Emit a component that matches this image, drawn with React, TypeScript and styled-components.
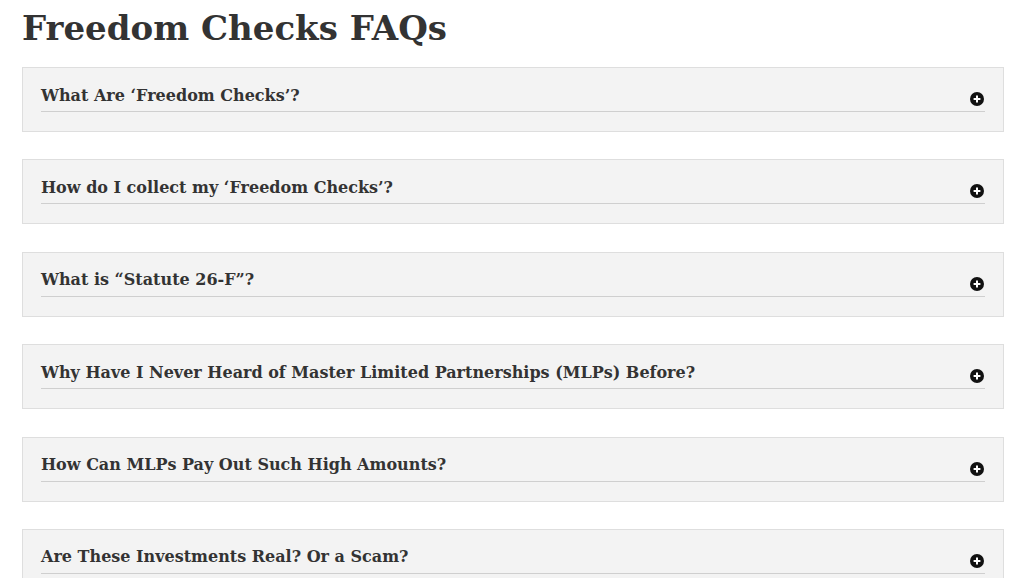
import styled, { createGlobalStyle } from "styled-components";

const GlobalStyle = createGlobalStyle`
  html, body {
    margin: 0;
    padding: 0;
    background: #ffffff;
  }
  body {
    font-family: "DejaVu Serif", "Liberation Serif", serif;
    color: #333333;
  }
`;

const Page = styled.main`
  padding: 0 20px 0 22px;
  width: 982px;
`;

const Title = styled.h1`
  margin: 0;
  padding-top: 6px;
  height: 61px;
  font-size: 34px;
  line-height: 44px;
  font-weight: 700;
  color: #333333;
`;

const List = styled.div`
  display: flex;
  flex-direction: column;
  gap: 27.4px;
`;

const Item = styled.section`
  background: #f3f3f3;
  border: 1px solid #dedede;
  padding: 0 18px 19px;
`;

const Header = styled.div`
  display: flex;
  align-items: center;
  justify-content: space-between;
  height: 43px;
  border-bottom: 1px solid #cfcfcf;
`;

const Question = styled.h3`
  margin: 0;
  padding-top: 11px;
  font-size: 16px;
  font-weight: 700;
  color: #333333;
`;

const Toggle = styled.span`
  display: flex;
  width: 14px;
  height: 14px;
  margin: 19px 1px 0 0;
`;

const PlusIcon = () => (
  <svg width="14" height="14" viewBox="0 0 14 14">
    <circle cx="7" cy="7" r="7" fill="#111111" />
    <path d="M7 3.6v6.8M3.6 7h6.8" stroke="#ffffff" strokeWidth="2" />
  </svg>
);

const faqs = [
  "What Are \u2018Freedom Checks\u2019?",
  "How do I collect my \u2018Freedom Checks\u2019?",
  "What is \u201CStatute 26-F\u201D?",
  "Why Have I Never Heard of Master Limited Partnerships (MLPs) Before?",
  "How Can MLPs Pay Out Such High Amounts?",
  "Are These Investments Real? Or a Scam?",
];

export default function App() {
  return (
    <Page>
      <GlobalStyle />
      <Title>Freedom Checks FAQs</Title>
      <List>
        {faqs.map((q) => (
          <Item key={q}>
            <Header>
              <Question>{q}</Question>
              <Toggle>
                <PlusIcon />
              </Toggle>
            </Header>
          </Item>
        ))}
      </List>
    </Page>
  );
}
